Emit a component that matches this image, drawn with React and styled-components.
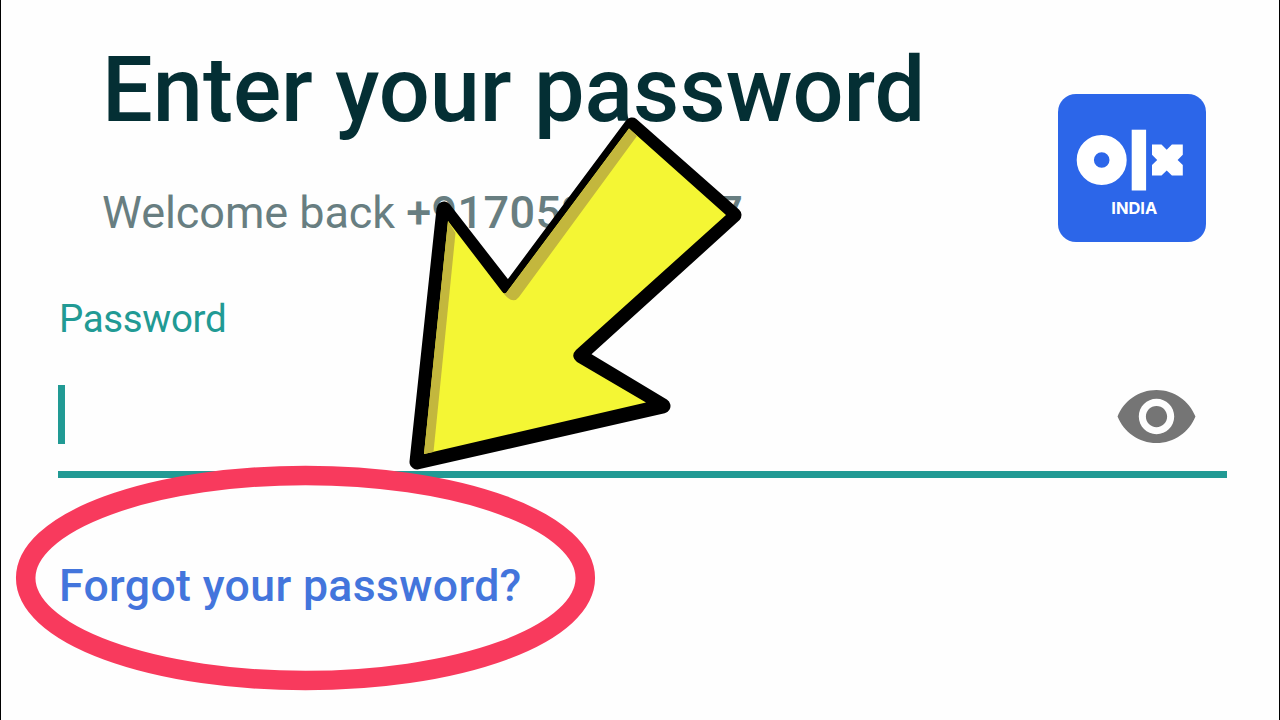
import React from 'react'
import styled, {createGlobalStyle} from 'styled-components'
import {MdVisibility} from 'react-icons/md'

const teal = '#219a94'

const GlobalStyle = createGlobalStyle`
  body {
    margin: 0;
    background: #fefefe;
    font-family: Roboto, 'Liberation Sans', sans-serif;
  }
`

const Screen = styled.main`
  position: relative;
  box-sizing: border-box;
  width: 1280px;
  height: 720px;
  padding: 41px 52px 0 57px;
  overflow: hidden;
  background: #fefefe;
  border: solid #000;
  border-width: 0 1px;
`

const Header = styled.header`
  display: flex;
  justify-content: space-between;
  height: 254px;
  padding: 0 21px 0 44px;
  box-sizing: border-box;
`

const Title = styled.h1`
  margin: 0 0 42px;
  color: #042f34;
  font-size: 90px;
  font-weight: 500;
  line-height: 100px;
  white-space: nowrap;
`

const Welcome = styled.p`
  margin: 0;
  color: #687e81;
  font-size: 45px;
  line-height: 60px;
  letter-spacing: -0.07px;
  white-space: nowrap;
`

const Phone = styled.span`
  font-weight: 500;
  letter-spacing: 0.4px;
`

const Logo = styled.svg`
  width: 148px;
  height: 148px;
  margin-top: 53px;
  flex: none;
`

const LogoText = styled.text`
  fill: #fff;
  font-family: Inter, sans-serif;
  font-size: 16.5px;
  font-weight: 700;
`

const Label = styled.label`
  display: block;
  padding-left: 1px;
  color: ${teal};
  font-size: 38.5px;
  line-height: 48px;
  letter-spacing: -0.35px;
`

const Field = styled.div`
  display: flex;
  justify-content: space-between;
  align-items: center;
  box-sizing: border-box;
  height: 135px;
  padding: 13px 28px 0 0;
  border-bottom: 7px solid ${teal};
`

const Caret = styled.span`
  width: 7px;
  height: 59px;
  margin-top: 1px;
  background: ${teal};
`

const EyeIcon = styled(MdVisibility)`
  width: 85px;
  height: 85px;
  margin-top: 6px;
  color: #757575;
`

const ForgotLink = styled.a`
  display: inline-block;
  margin: 78px 0 0 1px;
  color: #4375dc;
  font-size: 44.6px;
  font-weight: 500;
  line-height: 60px;
  letter-spacing: 0.35px;
  white-space: nowrap;
`

const Marks = styled.svg`
  position: absolute;
  top: 0;
  left: -1px;
  width: 1280px;
  height: 720px;
  pointer-events: none;
`

const OlxLogo = () => (
  <Logo viewBox="0 0 148 148">
    <rect width="148" height="148" rx="18" fill="#2c66e9" />
    <circle cx="43.7" cy="66" r="16.4" fill="none" stroke="#fff" strokeWidth="17.2" />
    <rect x="73.7" y="35.7" width="14.4" height="60.8" fill="#fff" />
    <path
      d="M94 50.5h9.5l5.2 5.2 5.2-5.2h10.9v10.2l-5.2 5.2 5.2 5.2v10.5h-10.9l-5.2-5.2-5.2 5.2H94V71.1l5.2-5.2-5.2-5.2z"
      fill="#fff"
    />
    <LogoText x="53.3" y="120" textLength="46" lengthAdjust="spacingAndGlyphs">INDIA</LogoText>
  </Logo>
)

const Annotations = () => (
  <Marks viewBox="0 0 1280 720">
    <ellipse cx="305.5" cy="578" rx="279.8" ry="102.5" fill="none" stroke="#f83a5d" strokeWidth="19.5" />
    <path
      d="M632 125L734 215L579 355.5L663 406L417 462L444 209L508 291.5Z"
      fill="#000"
      stroke="#000"
      strokeWidth="15"
      strokeLinejoin="round"
    />
    <path
      d="M629 128.5L726 215L576 350Q570 356 577 362L646 402.5L424 454L448 221L502 291.5Q505 296 508 290.5Z"
      fill="#f4f634"
    />
    <path d="M448 221L455.5 233L433.5 452L424 454Z" fill="#c3b73d" />
    <path d="M629 128.5L637 136L519 297Q513 305 504 294Q506 294 508 290.5Z" fill="#c3b73d" />
  </Marks>
)

const App = () => (
  <>
    <GlobalStyle />
    <Screen>
      <Header>
        <div>
          <Title>Enter your password</Title>
          <Welcome>
            Welcome back <Phone>+917053000007</Phone>
          </Welcome>
        </div>
        <OlxLogo />
      </Header>
      <Label>Password</Label>
      <Field>
        <Caret />
        <EyeIcon />
      </Field>
      <ForgotLink>Forgot your password?</ForgotLink>
      <Annotations />
    </Screen>
  </>
)

export default App
